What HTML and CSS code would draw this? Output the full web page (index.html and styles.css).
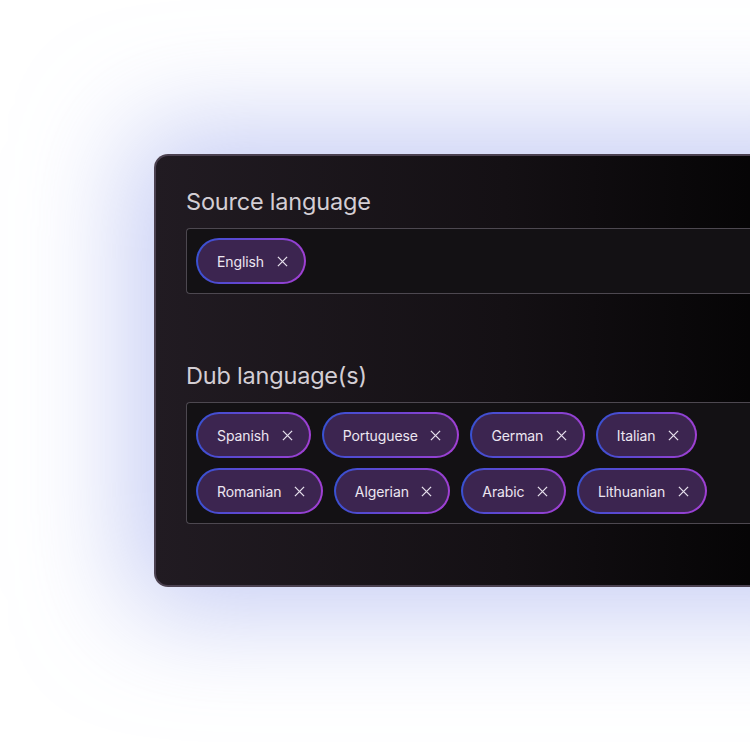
FILE: index.html
```html
<!DOCTYPE html>
<html>
<head>
<meta charset="utf-8">
<link rel="stylesheet" href="styles.css">
</head>
<body>
<div class="stage">
  <div class="card">
    <div class="field">
      <div class="label">Source language</div>
      <div class="box">
        <span class="chip">English<svg viewBox="0 0 12 12"><path d="M1 1L11 11M11 1L1 11"/></svg></span>
      </div>
    </div>
    <div class="field dub">
      <div class="label">Dub language(s)</div>
      <div class="box">
        <span class="chip">Spanish<svg viewBox="0 0 12 12"><path d="M1 1L11 11M11 1L1 11"/></svg></span>
        <span class="chip">Portuguese<svg viewBox="0 0 12 12"><path d="M1 1L11 11M11 1L1 11"/></svg></span>
        <span class="chip">German<svg viewBox="0 0 12 12"><path d="M1 1L11 11M11 1L1 11"/></svg></span>
        <span class="chip">Italian<svg viewBox="0 0 12 12"><path d="M1 1L11 11M11 1L1 11"/></svg></span>
        <span class="chip">Romanian<svg viewBox="0 0 12 12"><path d="M1 1L11 11M11 1L1 11"/></svg></span>
        <span class="chip">Algerian<svg viewBox="0 0 12 12"><path d="M1 1L11 11M11 1L1 11"/></svg></span>
        <span class="chip">Arabic<svg viewBox="0 0 12 12"><path d="M1 1L11 11M11 1L1 11"/></svg></span>
        <span class="chip">Lithuanian<svg viewBox="0 0 12 12"><path d="M1 1L11 11M11 1L1 11"/></svg></span>
      </div>
    </div>
  </div>
</div>
</body>
</html>
```
FILE: styles.css
```css
html, body {
  margin: 0;
  padding: 0;
  background: #ffffff;
  width: 750px;
  height: 742px;
  overflow: hidden;
  font-family: Inter, "Noto Sans", sans-serif;
}
.stage {
  padding: 154px 0 0 154px;
}
.card {
  width: 700px;
  height: 433px;
  box-sizing: border-box;
  border: 2px solid #4b4150;
  border-right: none;
  border-radius: 14px 0 0 14px;
  background: linear-gradient(90deg, #211b22 0%, #141014 50%, #000000 100%);
  box-shadow: 0 0 110px 25px rgba(150, 162, 235, 0.55);
  padding: 30px 0 0 30px;
}
.label {
  color: #d3ced4;
  font-size: 23.5px;
  line-height: 32px;
  font-weight: 400;
  letter-spacing: -0.2px;
  margin-bottom: 10px;
}
.dub {
  margin-top: 66px;
}
.box {
  border: 1px solid #4d4850;
  border-right: none;
  border-radius: 4px 0 0 4px;
  background: #131114;
  padding: 9px 9px;
  display: flex;
  flex-wrap: wrap;
  gap: 10px 11px;
  width: 602px;
}
.chip {
  display: inline-flex;
  align-items: center;
  height: 46px;
  box-sizing: border-box;
  padding: 0 16px 0 19px;
  border: 2px solid transparent;
  border-radius: 23px;
  background:
    linear-gradient(#3c2550, #3c2550) padding-box,
    linear-gradient(100deg, #3552d2 0%, #6a45d0 50%, #a43fd4 100%) border-box;
  color: #ece6f0;
  font-size: 14px;
  letter-spacing: -0.1px;
  gap: 12.5px;
}
.chip svg {
  width: 11px;
  height: 11px;
  stroke: #e6e0ec;
  stroke-width: 1.4;
  fill: none;
}
```
